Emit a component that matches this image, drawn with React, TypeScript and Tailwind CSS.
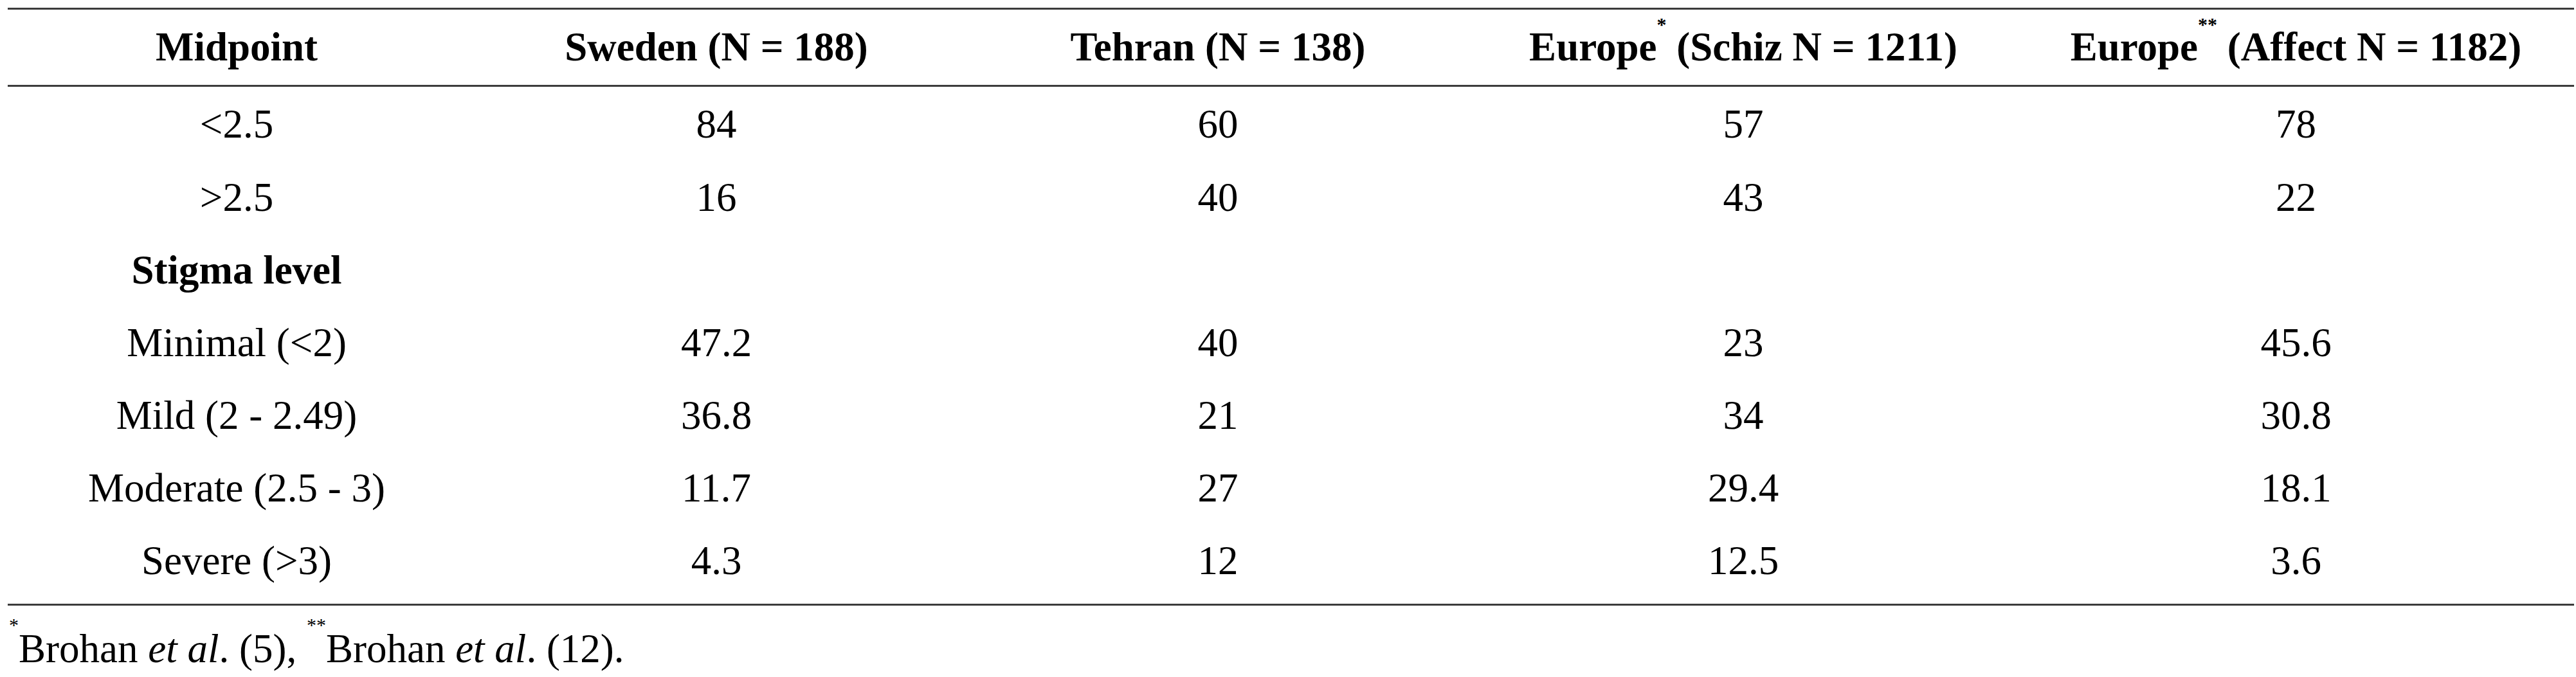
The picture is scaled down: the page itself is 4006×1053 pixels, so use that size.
const rows: { label: string; bold?: boolean; values: string[] }[] = [
  { label: "<2.5", values: ["84", "60", "57", "78"] },
  { label: ">2.5", values: ["16", "40", "43", "22"] },
  { label: "Stigma level", bold: true, values: ["", "", "", ""] },
  { label: "Minimal (<2)", values: ["47.2", "40", "23", "45.6"] },
  { label: "Mild (2 - 2.49)", values: ["36.8", "21", "34", "30.8"] },
  { label: "Moderate (2.5 - 3)", values: ["11.7", "27", "29.4", "18.1"] },
  { label: "Severe (>3)", values: ["4.3", "12", "12.5", "3.6"] },
]

const grid = "grid grid-cols-[712px_780px_780px_854px_865px]"

export default function App() {
  return (
    <div className="w-[4006px] h-[1053px] bg-white text-black font-['Liberation_Serif','Times_New_Roman',serif] text-[63px] leading-none pl-[12px] pr-[3px] pt-[12px]">
      <div className="border-t-[3px] border-b-[3px] border-[#3c3c3c]">
        <div className={`${grid} h-[117px] items-center font-bold text-center`}>
          <div>Midpoint</div>
          <div>Sweden (N = 188)</div>
          <div>Tehran (N = 138)</div>
          <div>
            Europe<sup className="text-[30px] align-top relative top-[-4px]">*</sup> (Schiz N = 1211)
          </div>
          <div>
            Europe<sup className="text-[30px] align-top relative top-[-4px]">**</sup> (Affect N = 1182)
          </div>
        </div>
      </div>
      <div className="border-b-[3px] border-[#3c3c3c] pb-[10px]">
        {rows.map((r, i) => (
          <div
            key={i}
            className={`${grid} ${i === 0 ? "h-[116px]" : "h-[113px]"} items-center text-center`}
          >
            <div className={r.bold ? "font-bold" : ""}>{r.label}</div>
            {r.values.map((v, j) => (
              <div key={j}>{v}</div>
            ))}
          </div>
        ))}
      </div>
      <div className="pt-[36px] pl-[2px]">
        <sup className="text-[30px] align-top relative top-[-6px]">*</sup>Brohan <i>et al</i>. (5),{" "}
        <sup className="text-[30px] align-top relative top-[-6px]">**</sup>Brohan <i>et al</i>. (12).
      </div>
    </div>
  )
}
